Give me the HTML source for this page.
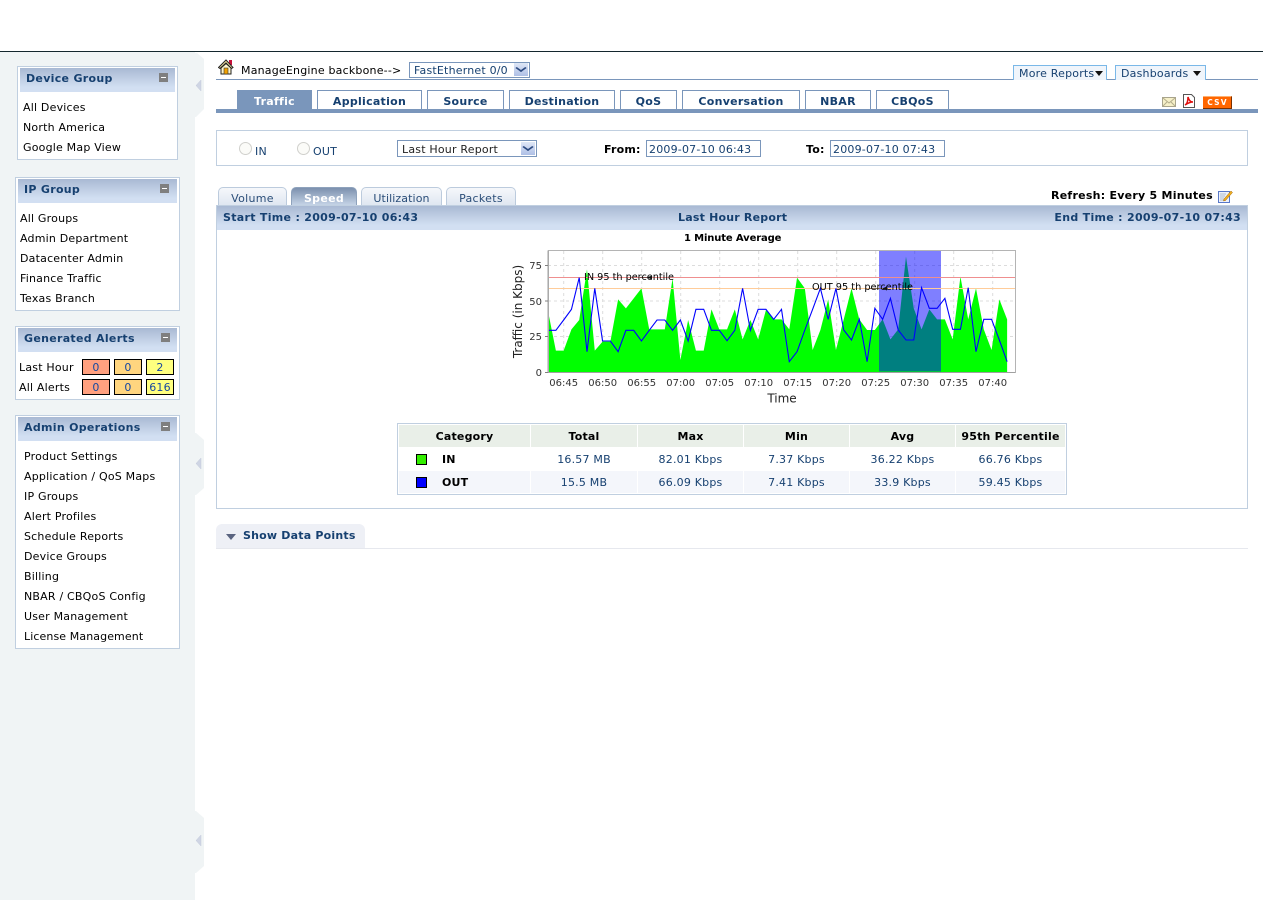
<!DOCTYPE html>
<html><head><meta charset="utf-8"><title>Traffic</title>
<style>
html,body{margin:0;padding:0;background:#fff;width:1263px;height:900px;overflow:hidden;font-family:"DejaVu Sans","Liberation Sans",sans-serif;font-size:11px;color:#000;letter-spacing:.2px}
div,span,svg{position:absolute;box-sizing:border-box}
.t{white-space:nowrap;line-height:16px;height:16px;transform:translateY(1px)}
.b{font-weight:bold}
.n{color:#164070}
.box{background:#fff;border:1px solid #c0cfe0;outline:0}
.hd{background:linear-gradient(#a9b9d3,#d2dff2 80%)}
.ttl{font-weight:bold;color:#164070;letter-spacing:.3px;white-space:nowrap;line-height:16px;height:16px;transform:translateY(1px)}
.min{width:9px;height:9px;background:#7f7f7f}
.min:after{content:"";position:absolute;left:2px;top:4px;width:5px;height:1px;background:#fff}
.tab{top:90px;height:19px;border:1px solid #7a96bb;border-bottom:0;background:#fff;text-align:center;font-weight:bold;color:#164070;line-height:21px;letter-spacing:.27px;white-space:nowrap}
.sub{top:187px;height:18px;border:1px solid #bccbdd;border-bottom:0;border-radius:5px 5px 0 0;background:linear-gradient(#f6f8fb,#dfe7f1);text-align:center;color:#2a4d78;line-height:21px;letter-spacing:.3px;white-space:nowrap}
.chip{height:16px;width:28px;border:1px solid #000;text-align:center;color:#1848a0;line-height:16px}
.inp{border:1px solid #7a96bb;background:#fff;color:#164070;line-height:17px;white-space:nowrap;height:17px;padding-left:2px}
.arr{background:linear-gradient(#dfe7f6,#aebfe6);width:14px;height:13px}
.arr:after{content:"";position:absolute;left:3px;top:1px;border:1px solid #2c4a80;border-width:0 2px 2px 0;width:6px;height:6px;transform:scale(1,.7) rotate(45deg);transform-origin:center}
.th{top:425px;height:22px;background:#e9efe8;font-weight:bold;text-align:center;line-height:24px;white-space:nowrap}
.td{height:22px;text-align:center;color:#164070;line-height:24px;white-space:nowrap}
.alt{background:#f4f6fb}
</style></head><body>

<!-- top line -->
<div style="left:0;top:51px;width:1263px;height:1px;background:#14272e"></div>

<!-- sidebar -->
<div style="left:0;top:52px;width:195px;height:848px;background:#f0f4f5"></div>
<svg style="left:195px;top:52px" width="12" height="848" viewBox="0 0 12 848">
<g fill="#f0f4f5">
<polygon points="0,1 2,1 9,7 9,57 1,65 0,65"/>
<polygon points="0,381 1,381 9,388 9,436 1,443 0,443"/>
<polygon points="0,759 1,759 9,766 9,814 1,821 0,821"/>
</g>
<g fill="#cfd5e4" stroke="#c4cbdc" stroke-width=".5">
<polygon points="1,33.5 6,28 6,39"/>
<polygon points="1,411.5 6,406 6,417"/>
<polygon points="1,788.5 6,783 6,794"/>
</g>
</svg>

<!-- Device Group -->
<div class="box" style="left:17px;top:66px;width:161px;height:94px"></div>
<div class="hd" style="left:20px;top:68px;width:155px;height:24px"></div>
<div class="ttl" style="left:26px;top:70px">Device Group</div>
<div class="min" style="left:159px;top:73px"></div>
<div class="t" style="left:23px;top:99px">All Devices</div>
<div class="t" style="left:23px;top:119px">North America</div>
<div class="t" style="left:23px;top:139px">Google Map View</div>

<!-- IP Group -->
<div class="box" style="left:15px;top:177px;width:165px;height:134px"></div>
<div class="hd" style="left:18px;top:179px;width:159px;height:24px"></div>
<div class="ttl" style="left:24px;top:181px">IP Group</div>
<div class="min" style="left:160px;top:184px"></div>
<div class="t" style="left:20px;top:210px">All Groups</div>
<div class="t" style="left:20px;top:230px">Admin Department</div>
<div class="t" style="left:20px;top:250px">Datacenter Admin</div>
<div class="t" style="left:20px;top:270px">Finance Traffic</div>
<div class="t" style="left:20px;top:290px">Texas Branch</div>

<!-- Alerts -->
<div class="box" style="left:15px;top:326px;width:165px;height:74px"></div>
<div class="hd" style="left:18px;top:328px;width:159px;height:24px"></div>
<div class="ttl" style="left:24px;top:330px">Generated Alerts</div>
<div class="min" style="left:161px;top:333px"></div>
<div class="t" style="left:19px;top:359px">Last Hour</div>
<div class="t" style="left:19px;top:379px">All Alerts</div>
<div class="chip" style="left:82px;top:359px;background:#ffa07f">0</div>
<div class="chip" style="left:114px;top:359px;background:#ffd57f">0</div>
<div class="chip" style="left:146px;top:359px;background:#ffff7f">2</div>
<div class="chip" style="left:82px;top:379px;background:#ffa07f">0</div>
<div class="chip" style="left:114px;top:379px;background:#ffd57f">0</div>
<div class="chip" style="left:146px;top:379px;background:#ffff7f">616</div>

<!-- Admin -->
<div class="box" style="left:15px;top:415px;width:165px;height:234px"></div>
<div class="hd" style="left:18px;top:417px;width:159px;height:24px"></div>
<div class="ttl" style="left:24px;top:419px">Admin Operations</div>
<div class="min" style="left:161px;top:422px"></div>
<div class="t" style="left:24px;top:448px">Product Settings</div>
<div class="t" style="left:24px;top:468px">Application / QoS Maps</div>
<div class="t" style="left:24px;top:488px">IP Groups</div>
<div class="t" style="left:24px;top:508px">Alert Profiles</div>
<div class="t" style="left:24px;top:528px">Schedule Reports</div>
<div class="t" style="left:24px;top:548px">Device Groups</div>
<div class="t" style="left:24px;top:568px">Billing</div>
<div class="t" style="left:24px;top:588px">NBAR / CBQoS Config</div>
<div class="t" style="left:24px;top:608px">User Management</div>
<div class="t" style="left:24px;top:628px;letter-spacing:.1px">License Management</div>

<!-- breadcrumb -->
<svg style="left:218px;top:59px" width="16" height="16" viewBox="0 0 16 16">
<rect x="11" y="1" width="3" height="5" fill="#c8103a"/>
<path d="M.5 8.5 8 1l7 7.5-1.500 1L8 4 2 9.500z" fill="#f4e4a0" stroke="#222" stroke-width="1"/>
<path d="M3 9v6h10V9L8 4.500z" fill="#fff6cc" stroke="#222" stroke-width="1"/>
<rect x="6" y="9" width="4" height="6" fill="#f0a000" stroke="#333" stroke-width=".6"/>
</svg>
<div class="t" style="left:241px;top:62px">ManageEngine backbone--&gt;</div>
<div class="inp" style="left:409px;top:62px;width:121px;height:16px;padding-left:4px;line-height:16px">FastEthernet 0/0<div class="arr" style="right:1px;top:0"></div></div>
<div style="left:216px;top:79px;width:1042px;height:1px;background:#7a96bb"></div>
<div style="left:1013px;top:65px;width:94px;height:15px;border:1px solid #7ab8e8;border-bottom:0;background:#f0f5fb"></div>
<div class="t n" style="left:1019px;top:65px;letter-spacing:.2px">More Reports</div>
<div style="left:1095px;top:71px;border:4px solid transparent;border-top:5px solid #111;border-bottom:0"></div>
<div style="left:1115px;top:65px;width:91px;height:15px;border:1px solid #7ab8e8;border-bottom:0;background:#f0f5fb"></div>
<div class="t n" style="left:1121px;top:65px;letter-spacing:.2px">Dashboards</div>
<div style="left:1193px;top:71px;border:4px solid transparent;border-top:5px solid #111;border-bottom:0"></div>

<!-- main tabs -->
<div class="tab" style="left:237px;width:75px;background:#7a96bb;color:#fff;border:0;line-height:24px">Traffic</div>
<div class="tab" style="left:317px;width:105px">Application</div>
<div class="tab" style="left:427px;width:77px">Source</div>
<div class="tab" style="left:509px;width:106px">Destination</div>
<div class="tab" style="left:620px;width:57px">QoS</div>
<div class="tab" style="left:682px;width:118px">Conversation</div>
<div class="tab" style="left:805px;width:66px">NBAR</div>
<div class="tab" style="left:876px;width:73px">CBQoS</div>
<div style="left:216px;top:109px;width:1042px;height:4px;background:#7a96bb"></div>

<!-- icons -->
<svg style="left:1161px;top:96px" width="16" height="12" viewBox="0 0 16 12">
<rect x="1.500" y="1.500" width="13" height="9" fill="#f6f0c8" stroke="#a8a48c"/>
<path d="M2 2l6 5 6-5M2 10l4-4M14 10l-4-4" fill="none" stroke="#b4ae8c"/>
</svg>
<svg style="left:1182px;top:94px" width="14" height="15" viewBox="0 0 14 15">
<path d="M1.500.5h8l3 3v10h-11z" fill="#fff" stroke="#555"/>
<path d="M3 11c2-1 3-4 3-8 1 3 2 5 5 5-3 0-5 1-8 3z" fill="none" stroke="#e01010" stroke-width="1.500"/>
</svg>
<div style="left:1203px;top:96px;width:29px;height:13px;background:#ff6600;border-right:1px solid #7a3000;border-bottom:1px solid #7a3000;border-top:1px solid #ffb070"></div>
<div class="b" style="left:1203px;top:96px;width:29px;height:13px;line-height:13px;color:#fff;text-align:center;font-size:7.5px;letter-spacing:1.2px;white-space:nowrap">CSV</div>

<!-- filter -->
<div class="box" style="left:216px;top:130px;width:1032px;height:36px"></div>
<div style="left:239px;top:142px;width:13px;height:13px;border:1px solid #d0d0cc;border-radius:50%;background:#fbfbf8"></div>
<div class="t n" style="left:255px;top:143px">IN</div>
<div style="left:297px;top:142px;width:13px;height:13px;border:1px solid #d0d0cc;border-radius:50%;background:#fbfbf8"></div>
<div class="t n" style="left:313px;top:143px">OUT</div>
<div class="inp" style="left:397px;top:140px;width:140px;padding-left:4px;color:#222">Last Hour Report<div class="arr" style="right:1px;top:1px"></div></div>
<div class="t b" style="left:604px;top:141px">From:</div>
<div class="inp" style="left:646px;top:140px;width:115px">2009-07-10 06:43</div>
<div class="t b" style="left:806px;top:141px">To:</div>
<div class="inp" style="left:830px;top:140px;width:115px">2009-07-10 07:43</div>

<!-- sub tabs -->
<div class="sub" style="left:218px;width:69px">Volume</div>
<div class="sub" style="left:291px;width:66px;background:linear-gradient(#7c90ae,#c4d3e6);border-color:#8ea2bc;color:#fff;font-weight:bold">Speed</div>
<div class="sub" style="left:361px;width:81px;letter-spacing:.1px">Utilization</div>
<div class="sub" style="left:446px;width:70px">Packets</div>
<div class="t b" style="left:1051px;top:187px;letter-spacing:.25px">Refresh: Every 5 Minutes</div>
<svg style="left:1217px;top:188px" width="16" height="16" viewBox="0 0 16 16">
<rect x="1.500" y="3.500" width="11" height="11" fill="#eef2fc" stroke="#5878c8"/>
<path d="M3 6h6M3 8h5M3 10h4M3 12h6" stroke="#9ab" stroke-width=".8"/>
<path d="M7 11l7-8 1.500 1.500-7 8-2 .5z" fill="#f0b020" stroke="#a06000" stroke-width=".5"/>
</svg>

<!-- report -->
<div class="box" style="left:216px;top:205px;width:1032px;height:304px"></div>
<div class="hd" style="left:217px;top:206px;width:1030px;height:24px"></div>
<div class="ttl" style="left:223px;top:209px">Start Time : 2009-07-10 06:43</div>
<div class="ttl" style="left:678px;top:209px;letter-spacing:.2px">Last Hour Report</div>
<div class="ttl" style="right:22px;top:209px">End Time : 2009-07-10 07:43</div>
<div class="t b" style="left:684px;top:231px;font-size:10px;letter-spacing:-.13px;transform:none">1 Minute Average</div>

<!-- chart -->
<svg style="left:500px;top:240px;letter-spacing:0" width="530" height="170" viewBox="500 240 530 170">
<g stroke="#dcdcdc" stroke-width="1" stroke-dasharray="3 3" fill="none">
<path d="M548 265.500H1015M548 301H1015M548 336.500H1015"/>
<path d="M563.700 251V372M602.700 251V372M641.700 251V372M680.700 251V372M719.700 251V372M758.700 251V372M797.700 251V372M836.700 251V372M875.700 251V372M914.700 251V372M953.700 251V372M992.700 251V372"/>
</g>
<g transform="translate(548.100,240) scale(7.780,0.33333)">
<polygon fill="#00ff00" points="0,396 0,215 1,332 2,332 3,268 4,240 5,88 6,332 7,305 8,305 9,178 10,205 11,175 12,145 13,268 14,268 15,268 16,115 17,360 18,240 19,332 20,332 21,208 22,268 23,268 24,208 25,298 26,240 27,298 28,210 29,238 30,238 31,268 32,113 33,145 34,330 35,270 36,178 37,330 38,238 39,145 40,238 41,270 42,270 43,238 44,298 45,268 46,50 47,205 48,268 49,208 50,238 51,238 52,298 53,110 54,238 55,145 56,268 57,330 58,178 59,238 59,396"/>
</g>
<rect x="879" y="251" width="62" height="120.500" fill="#0000ff" fill-opacity=".5"/>
<path d="M548 277.500H1015" stroke="#ef8f8f" stroke-width="1"/>
<path d="M548 288.500H1015" stroke="#ffcc99" stroke-width="1"/>
<g transform="translate(548.100,240) scale(7.780,0.33333)">
<polyline fill="none" stroke="#0000ff" stroke-width="1.100" vector-effect="non-scaling-stroke" points="0,271 1,271 2,240 3,208 4,113 5,335 6,145 7,303 8,303 9,335 10,271 11,271 12,303 13,271 14,240 15,240 16,271 17,240 18,303 19,208 20,208 21,271 22,271 23,302 24,271 25,145 26,271 27,208 28,208 29,238 30,208 31,365 32,335 33,270 34,208 35,145 36,238 37,145 38,270 39,300 40,238 41,365 42,205 43,238 44,175 45,270 46,300 47,300 48,143 49,205 50,205 51,175 52,268 53,268 54,143 55,335 56,238 57,238 58,300 59,365"/>
</g>
<rect x="548.500" y="250.500" width="467" height="122" fill="none" stroke="#b4b4b4" stroke-width="1"/>
<path d="M548 250.500V372.500H1015" fill="none" stroke="#a0a0a0"/>
<g font-family="DejaVu Sans, sans-serif" font-size="10" fill="#000">
<text x="584" y="280" textLength="90" lengthAdjust="spacingAndGlyphs">IN 95 th percentile</text>
<text x="812" y="290" textLength="101" lengthAdjust="spacingAndGlyphs">OUT 95 th percentile</text>
</g>
<path d="M647 277.500l5-2v4zM882 288.500l5-2v4z" fill="#111"/>
<path d="M640 277.500h8M870 288.500h12" stroke="#111" stroke-width=".6"/>
<g font-family="DejaVu Sans, sans-serif" font-size="10" fill="#333" text-anchor="end">
<text x="542" y="269">75</text><text x="542" y="305">50</text><text x="542" y="340">25</text><text x="542" y="376">0</text>
</g>
<g font-family="DejaVu Sans, sans-serif" font-size="10" fill="#333" text-anchor="middle">
<text x="563.700" y="386">06:45</text><text x="602.700" y="386">06:50</text><text x="641.700" y="386">06:55</text><text x="680.700" y="386">07:00</text><text x="719.700" y="386">07:05</text><text x="758.700" y="386">07:10</text><text x="797.700" y="386">07:15</text><text x="836.700" y="386">07:20</text><text x="875.700" y="386">07:25</text><text x="914.700" y="386">07:30</text><text x="953.700" y="386">07:35</text><text x="992.700" y="386">07:40</text>
</g>
<text x="782" y="402.500" font-family="DejaVu Sans, sans-serif" font-size="12" fill="#222" text-anchor="middle">Time</text>
<text transform="translate(522,311.500) rotate(-90)" font-family="DejaVu Sans, sans-serif" font-size="12" fill="#222" text-anchor="middle">Traffic (in Kbps)</text>
<g stroke="#808080"><path d="M545 265.500h3M545 301h3M545 336.500h3M545 372.500h3"/></g>
</svg>

<!-- table -->
<div style="left:397px;top:423px;width:670px;height:72px;border:1px solid #c0cfe0;background:#fff"></div>
<div class="th" style="left:399px;width:131px">Category</div>
<div class="th" style="left:531px;width:106px">Total</div>
<div class="th" style="left:638px;width:105px">Max</div>
<div class="th" style="left:744px;width:105px">Min</div>
<div class="th" style="left:850px;width:105px">Avg</div>
<div class="th" style="left:956px;width:109px">95th Percentile</div>

<div style="left:416px;top:454px;width:11px;height:11px;background:#33ee00;border:1px solid #000"></div>
<div class="td" style="left:442px;top:448px;color:#000;font-weight:bold">IN</div>
<div class="td" style="left:531px;top:448px;width:106px">16.57 MB</div>
<div class="td" style="left:638px;top:448px;width:105px">82.01 Kbps</div>
<div class="td" style="left:744px;top:448px;width:105px">7.37 Kbps</div>
<div class="td" style="left:850px;top:448px;width:105px">36.22 Kbps</div>
<div class="td" style="left:956px;top:448px;width:109px">66.76 Kbps</div>

<div class="alt" style="left:399px;top:471px;width:131px;height:22px"></div>
<div style="left:416px;top:477px;width:11px;height:11px;background:#0000ff;border:1px solid #000"></div>
<div class="td" style="left:442px;top:471px;color:#000;font-weight:bold">OUT</div>
<div class="td alt" style="left:531px;top:471px;width:106px">15.5 MB</div>
<div class="td alt" style="left:638px;top:471px;width:105px">66.09 Kbps</div>
<div class="td alt" style="left:744px;top:471px;width:105px">7.41 Kbps</div>
<div class="td alt" style="left:850px;top:471px;width:105px">33.9 Kbps</div>
<div class="td alt" style="left:956px;top:471px;width:109px">59.45 Kbps</div>

<!-- show data points -->
<div style="left:216px;top:524px;width:149px;height:24px;background:#eef0f6;border-radius:6px 6px 0 0"></div>
<div style="left:216px;top:548px;width:1032px;height:1px;background:#e6e8ee"></div>
<div style="left:226px;top:534px;border:5px solid transparent;border-top:6px solid #5a6480;border-bottom:0"></div>
<div class="ttl" style="left:243px;top:527px;letter-spacing:.2px">Show Data Points</div>

</body></html>
